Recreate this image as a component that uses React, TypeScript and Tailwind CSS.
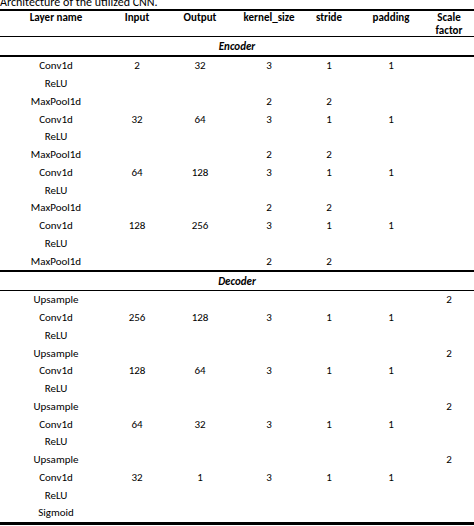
import React from "react";

type Row = {
  layer: string;
  input?: string;
  output?: string;
  kernel?: string;
  stride?: string;
  padding?: string;
  scale?: string;
};

const conv = (input: string, output: string): Row => ({
  layer: "Conv1d",
  input,
  output,
  kernel: "3",
  stride: "1",
  padding: "1",
});

const encoder: Row[] = [
  conv("2", "32"),
  { layer: "ReLU" },
  { layer: "MaxPool1d", kernel: "2", stride: "2" },
  conv("32", "64"),
  { layer: "ReLU" },
  { layer: "MaxPool1d", kernel: "2", stride: "2" },
  conv("64", "128"),
  { layer: "ReLU" },
  { layer: "MaxPool1d", kernel: "2", stride: "2" },
  conv("128", "256"),
  { layer: "ReLU" },
  { layer: "MaxPool1d", kernel: "2", stride: "2" },
];

const decoder: Row[] = [
  { layer: "Upsample", scale: "2" },
  conv("256", "128"),
  { layer: "ReLU" },
  { layer: "Upsample", scale: "2" },
  conv("128", "64"),
  { layer: "ReLU" },
  { layer: "Upsample", scale: "2" },
  conv("64", "32"),
  { layer: "ReLU" },
  { layer: "Upsample", scale: "2" },
  conv("32", "1"),
  { layer: "ReLU" },
  { layer: "Sigmoid" },
];

const cols = "grid grid-cols-[112px_50px_76px_62px_58px_66px_50px]";

function DataRow({ row }: { row: Row }) {
  const cells = [row.layer, row.input, row.output, row.kernel, row.stride, row.padding, row.scale];
  return (
    <div className={`${cols} h-[17.75px] items-center`}>
      {cells.map((value, i) => (
        <div key={i} className="text-center leading-[13px]">
          {value ?? ""}
        </div>
      ))}
    </div>
  );
}

export default function App() {
  return (
    <div
      className="w-[474px] h-[526px] overflow-hidden bg-white text-[11px] text-black"
      style={{ fontFamily: "Carlito, Lato, 'Liberation Sans', sans-serif" }}
    >
      {/* caption is cropped at the top edge in the source */}
      <div className="h-[9px] overflow-hidden">
        <p className="-mt-[5px] text-[12px] leading-[14px] whitespace-nowrap">
          Architecture of the utilized CNN.
        </p>
      </div>

      <div className="border-t-2 border-black">
        <div className={`${cols} h-[26px] border-b border-black font-bold leading-[13px]`}>
          <div className="text-center">Layer name</div>
          <div className="text-center">Input</div>
          <div className="text-center">Output</div>
          <div className="text-center">kernel_size</div>
          <div className="text-center">stride</div>
          <div className="text-center">padding</div>
          <div className="text-center">
            Scale
            <br />
            factor
          </div>
        </div>

        <div className="flex h-[20px] items-center justify-center border-b-2 border-black font-bold italic leading-[13px]">
          Encoder
        </div>
        <div className="border-b-2 border-black">
          {encoder.map((row, i) => (
            <DataRow key={i} row={row} />
          ))}
        </div>

        <div className="flex h-[19px] items-center justify-center border-b border-black font-bold italic leading-[13px]">
          Decoder
        </div>
        <div className="border-b-[3px] border-black">
          {decoder.map((row, i) => (
            <DataRow key={i} row={row} />
          ))}
        </div>
      </div>
    </div>
  );
}
